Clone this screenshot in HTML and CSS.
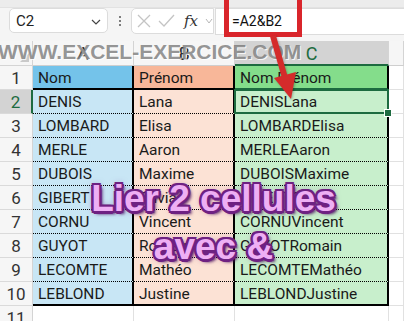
FILE: index.html
```html
<!DOCTYPE html>
<html lang="fr">
<head>
<meta charset="utf-8">
<title>Lier 2 cellules avec &amp;</title>
<link rel="stylesheet" href="styles.css">
</head>
<body>
<div class="app">
  <div class="edge"></div>
  <div class="fbar">
    <div class="namebox">
      <span class="ref">C2</span>
      <svg class="chev" width="10" height="6" viewBox="0 0 10 6"><path d="M1 1 L5 5 L9 1" fill="none" stroke="#444" stroke-width="1.2"/></svg>
    </div>
    <div class="dots"><span></span><span></span><span></span></div>
    <div class="iconsbox">
      <svg width="14" height="14" viewBox="0 0 14 14"><path d="M1 1 L13 13 M13 1 L1 13" stroke="#c4c4c4" stroke-width="1.3" fill="none"/></svg>
      <svg width="17" height="14" viewBox="0 0 17 14"><path d="M1 7 L6 12 L16 1" stroke="#c4c4c4" stroke-width="1.3" fill="none"/></svg>
      <span class="fx">fx</span>
      <svg width="8" height="6" viewBox="0 0 8 6"><path d="M1 1 L4 5 L7 1" fill="none" stroke="#b8b8b8" stroke-width="1"/></svg>
    </div>
    <div class="formula">=A2&amp;B2</div>
  </div>

  <div class="sheet">
    <div class="corner"></div>
    <div class="ch">A</div>
    <div class="ch">B</div>
    <div class="ch sel">C</div>
    <div class="ch"></div>

    <div class="rh">1</div>
    <div class="c a h">Nom</div>
    <div class="c b h">Prénom</div>
    <div class="c cc h">Nom Prénom</div>
    <div class="c"></div>

    <div class="rh sel">2</div>
    <div class="c a">DENIS</div>
    <div class="c b">Lana</div>
    <div class="c cc active">DENISLana</div>
    <div class="c"></div>

    <div class="rh">3</div>
    <div class="c a">LOMBARD</div>
    <div class="c b">Elisa</div>
    <div class="c cc">LOMBARDElisa</div>
    <div class="c"></div>

    <div class="rh">4</div>
    <div class="c a">MERLE</div>
    <div class="c b">Aaron</div>
    <div class="c cc">MERLEAaron</div>
    <div class="c"></div>

    <div class="rh">5</div>
    <div class="c a">DUBOIS</div>
    <div class="c b">Maxime</div>
    <div class="c cc">DUBOISMaxime</div>
    <div class="c"></div>

    <div class="rh">6</div>
    <div class="c a">GIBERT</div>
    <div class="c b">Olivia</div>
    <div class="c cc">GIBERTOlivia</div>
    <div class="c"></div>

    <div class="rh">7</div>
    <div class="c a">CORNU</div>
    <div class="c b">Vincent</div>
    <div class="c cc">CORNUVincent</div>
    <div class="c"></div>

    <div class="rh">8</div>
    <div class="c a">GUYOT</div>
    <div class="c b">Romain</div>
    <div class="c cc">GUYOTRomain</div>
    <div class="c"></div>

    <div class="rh">9</div>
    <div class="c a">LECOMTE</div>
    <div class="c b">Mathéo</div>
    <div class="c cc">LECOMTEMathéo</div>
    <div class="c"></div>

    <div class="rh">10</div>
    <div class="c a last">LEBLOND</div>
    <div class="c b last">Justine</div>
    <div class="c cc last">LEBLONDJustine</div>
    <div class="c"></div>

    <div class="rh">11</div>
    <div class="c"></div>
    <div class="c"></div>
    <div class="c"></div>
    <div class="c"></div>
  </div>

  <div class="watermark">WWW.EXCEL-EXERCICE.COM</div>
  <div class="redbox"></div>
  <svg class="arrow" width="50" height="70" viewBox="255 35 50 70">
    <path d="M273 36 L285 78" stroke="#d42b2b" stroke-width="6" fill="none"/>
    <path d="M291 99 L274 78 L296 72 Z" fill="#d42b2b"/>
  </svg>
  <div class="title">Lier 2 cellules<br>avec &amp;</div>
</div>
</body>
</html>
```

FILE: styles.css
```css
* { box-sizing: border-box; }
body { margin: 0; }
.app {
  position: relative;
  width: 404px;
  height: 321px;
  overflow: hidden;
  background: #fff;
  font-family: Roboto, "Liberation Sans", sans-serif;
  color: #1a1a1a;
}
.edge {
  height: 8px;
  background: #ececec;
  border-bottom: 1px solid #e2e2e2;
}
.fbar {
  height: 33px;
  background: #f5f5f5;
  display: flex;
  align-items: flex-start;
  padding-left: 9px;
}
.namebox {
  width: 99px;
  height: 25px;
  background: #fff;
  border: 1px solid #dcdcdc;
  border-radius: 5px;
  display: flex;
  align-items: center;
  justify-content: space-between;
  padding: 0 6px 0 6px;
}
.ref { font-size: 15px; color: #222; }
.chev { margin-top: 2px; }
.dots {
  width: 23px;
  height: 25px;
  display: flex;
  flex-direction: column;
  align-items: center;
  justify-content: center;
  gap: 2px;
}
.dots span {
  width: 2px;
  height: 2px;
  background: #555;
  border-radius: 50%;
}
.iconsbox {
  width: 83px;
  height: 26px;
  background: #fff;
  border: 1px solid #dcdcdc;
  border-radius: 5px 0 0 5px;
  display: flex;
  align-items: center;
  padding-left: 5px;
  gap: 7px;
}
.fx {
  font-family: "DejaVu Serif", "Liberation Serif", serif;
  font-style: italic;
  font-size: 15px;
  color: #333;
  margin-left: 2px;
}
.formula {
  flex: 1;
  height: 27px;
  margin-left: 1px;
  background: #fff;
  border: 1px solid #dcdcdc;
  border-right: none;
  font-size: 14px;
  line-height: 25px;
  padding-left: 16px;
  color: #111;
}

.sheet {
  display: grid;
  grid-template-columns: 33px 101px 101px 154px 15px;
  grid-template-rows: 25px repeat(11, 24px);
}
.corner {
  background: #f6f6f6;
  border-right: 1px solid #d4d4d4;
  border-bottom: 1px solid #d4d4d4;
  position: relative;
}
.corner::after {
  content: "";
  position: absolute;
  right: 3px;
  bottom: 3px;
  border-left: 9px solid transparent;
  border-bottom: 9px solid #c9c9c9;
}
.ch {
  background: #f6f6f6;
  border-right: 1px solid #d4d4d4;
  border-bottom: 1px solid #cfcfcf;
  text-align: center;
  font-size: 18px;
  line-height: 25px;
  color: #2b2b2b;
}
.ch.sel {
  background: #d3d3d3;
  color: #1d6b40;
  border-bottom: 2px solid #1d6b40;
}
.rh {
  background: #f6f6f6;
  border-right: 1px solid #d4d4d4;
  border-bottom: 1px solid #dadada;
  text-align: center;
  font-size: 17px;
  line-height: 24px;
  color: #333;
}
.rh.sel {
  background: #d3d3d3;
  color: #1d6b40;
  border-right: 2px solid #1d6b40;
}
.c {
  border-right: 1px solid #e1e1e1;
  border-bottom: 1px solid #e1e1e1;
  font-size: 15.5px;
  line-height: 24px;
  padding-left: 5px;
  white-space: nowrap;
  overflow: hidden;
}
.c.a { background: #c8e6f5; border-right: 2px solid #000; border-bottom: 1px dotted #000; }
.c.b { background: #fce2d5; border-right: 2px solid #000; border-bottom: 1px dotted #000; }
.c.cc { background: #c8efcc; border-right: 2px solid #000; border-bottom: 1px dotted #000; }
.c.a.h { background: #74c3ea; border-bottom: 2px solid #000; }
.c.b.h { background: #f8b799; border-bottom: 2px solid #000; }
.c.cc.h { background: #84dd8b; border-bottom: 2px solid #1d6b40; }
.c.last { border-bottom: 2px solid #000; }
.c.active { position: relative; overflow: visible; }
.c.active::after {
  content: "";
  position: absolute;
  left: -1px;
  top: -1px;
  right: -2px;
  bottom: -1px;
  border: 2px solid #1d6b40;
}
.c.active::before {
  content: "";
  position: absolute;
  right: -5px;
  bottom: -4px;
  width: 6px;
  height: 6px;
  background: #1d6b40;
  border: 1px solid #fff;
  z-index: 2;
}

.watermark {
  position: absolute;
  left: -2px;
  top: 41px;
  font-family: "Liberation Sans", Arial, sans-serif;
  font-weight: bold;
  font-size: 21px;
  line-height: 21px;
  color: rgba(110, 110, 110, 0.72);
  text-shadow: 1px 1px 0 rgba(255, 255, 255, 0.8);
  white-space: nowrap;
}
.redbox {
  position: absolute;
  left: 224px;
  top: -5px;
  width: 78px;
  height: 42px;
  border: 5px solid #d9252b;
}
.arrow {
  position: absolute;
  left: 255px;
  top: 35px;
  filter: drop-shadow(1px 1px 1px rgba(0, 0, 0, 0.25));
}
.title {
  position: absolute;
  left: 63px;
  top: 175px;
  width: 301px;
  text-align: center;
  font-family: "Liberation Sans", Arial, sans-serif;
  font-weight: bold;
  font-size: 37px;
  line-height: 48px;
  color: #eeaff4;
  white-space: nowrap;
  text-shadow:
    2.5px 0 0 #6e2182, -2.5px 0 0 #6e2182, 0 2.5px 0 #6e2182, 0 -2.5px 0 #6e2182,
    1.8px 1.8px 0 #6e2182, -1.8px -1.8px 0 #6e2182, 1.8px -1.8px 0 #6e2182, -1.8px 1.8px 0 #6e2182,
    3px 3px 3px rgba(70, 10, 90, 0.85), 0 0 7px rgba(120, 40, 140, 0.6);
}
```
